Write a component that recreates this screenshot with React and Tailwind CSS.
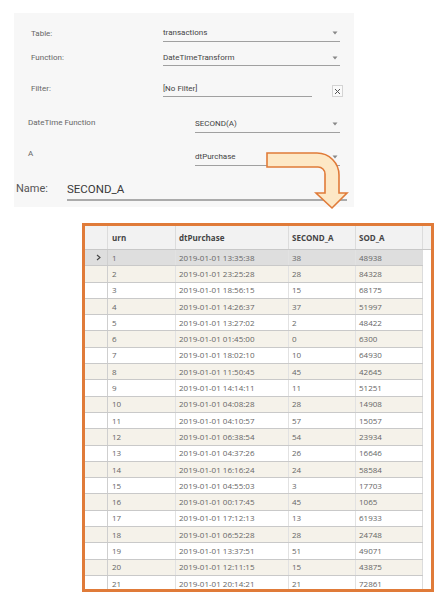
import React from "react";

const rows = [
  ["1", "2019-01-01 13:35:38", "38", "48938"],
  ["2", "2019-01-01 23:25:28", "28", "84328"],
  ["3", "2019-01-01 18:56:15", "15", "68175"],
  ["4", "2019-01-01 14:26:37", "37", "51997"],
  ["5", "2019-01-01 13:27:02", "2", "48422"],
  ["6", "2019-01-01 01:45:00", "0", "6300"],
  ["7", "2019-01-01 18:02:10", "10", "64930"],
  ["8", "2019-01-01 11:50:45", "45", "42645"],
  ["9", "2019-01-01 14:14:11", "11", "51251"],
  ["10", "2019-01-01 04:08:28", "28", "14908"],
  ["11", "2019-01-01 04:10:57", "57", "15057"],
  ["12", "2019-01-01 06:38:54", "54", "23934"],
  ["13", "2019-01-01 04:37:26", "26", "16646"],
  ["14", "2019-01-01 16:16:24", "24", "58584"],
  ["15", "2019-01-01 04:55:03", "3", "17703"],
  ["16", "2019-01-01 00:17:45", "45", "1065"],
  ["17", "2019-01-01 17:12:13", "13", "61933"],
  ["18", "2019-01-01 06:52:28", "28", "24748"],
  ["19", "2019-01-01 13:37:51", "51", "49071"],
  ["20", "2019-01-01 12:11:15", "15", "43875"],
  ["21", "2019-01-01 20:14:21", "21", "72861"],
];

function Caret() {
  return (
    <svg width="6" height="4" viewBox="0 0 6 4" className="shrink-0">
      <path d="M0.5 0.5 L5.5 0.5 L3 3.5 Z" fill="#888" />
    </svg>
  );
}

function Field({ w, h, text, caret = true, big = false }) {
  return (
    <div
      className={`flex items-center justify-between ${w} ${h} ${
        big ? "border-b-2 border-[#ababab]" : "border-b border-[#a0a0a0]"
      } pr-[2px]`}
    >
      <span
        className={
          big
            ? "text-[11.5px] leading-[14px] text-[#3a3a3a]"
            : "text-[8px] leading-[10px] text-[#444]"
        }
      >
        {text}
      </span>
      {caret && <Caret />}
    </div>
  );
}

export default function App() {
  const panelFont = { fontFamily: "Roboto, 'Liberation Sans', sans-serif" };
  return (
    <div className="relative w-[448px] h-[605px] bg-white overflow-hidden">
      {/* Settings panel */}
      <div
        className="ml-[14px] mt-[13px] w-[340px] h-[194px] bg-[#f7f7f7] flex flex-col"
        style={panelFont}
      >
        <div className="mt-[12px] flex items-center pl-[17px]">
          <div className="w-[132px] text-[8px] text-[#666]">Table:</div>
          <Field w="w-[177px]" h="h-[17px]" text="transactions" />
        </div>
        <div className="mt-[8px] flex items-center pl-[17px]">
          <div className="w-[132px] text-[8px] text-[#666]">Function:</div>
          <Field w="w-[177px]" h="h-[16px]" text="DateTimeTransform" />
        </div>
        <div className="mt-[15px] flex items-end pl-[17px]">
          <div className="w-[132px] text-[8px] text-[#666] self-center">Filter:</div>
          <Field w="w-[149px]" h="h-[16px]" text="[No Filter]" caret={false} />
          <div className="ml-[20px] w-[11px] h-[12px] border border-[#d4d4d4] bg-[#fafafa] flex items-center justify-center">
            <svg width="7" height="7" viewBox="0 0 7 7">
              <path d="M1 1 L6 6 M6 1 L1 6" stroke="#555" strokeWidth="1" />
            </svg>
          </div>
        </div>
        <div className="mt-[19px] flex items-center pl-[14px]">
          <div className="w-[167px] text-[8px] text-[#666] pb-[4px]">DateTime Function</div>
          <Field w="w-[145px]" h="h-[17px]" text="SECOND(A)" />
        </div>
        <div className="mt-[15px] flex items-center pl-[14px]">
          <div className="w-[167px] text-[8px] text-[#666] pb-[6px]">A</div>
          <Field w="w-[145px]" h="h-[17px]" text="dtPurchase" />
        </div>
        <div className="mt-[13px] flex items-center pl-[2px]">
          <div className="w-[51px] text-[11px] text-[#555] pb-[2px]">Name:</div>
          <Field w="w-[280px]" h="h-[22px]" text="SECOND_A" caret={false} big />
        </div>
      </div>

      {/* Table */}
      <div
        className="ml-[82px] mt-[16px] w-[352px] h-[369px] border-[3px] border-[#e07b39] bg-white overflow-hidden"
        style={{ fontFamily: "'Open Sans', 'Liberation Sans', sans-serif" }}
      >
        <div className="flex h-[24px] bg-[#f2f2f2] border-b border-[#c8c8c8] text-[8px] font-bold text-[#444]">
          <div className="w-[23px] border-r border-[#dcdcdc]" />
          <div className="w-[68px] border-r border-[#dcdcdc] flex items-center pl-[4px]">urn</div>
          <div className="w-[113px] border-r border-[#dcdcdc] flex items-center pl-[3px]">dtPurchase</div>
          <div className="w-[67px] border-r border-[#dcdcdc] flex items-center pl-[3px]">SECOND_A</div>
          <div className="w-[67px] border-r border-[#dcdcdc] flex items-center pl-[3px]">SOD_A</div>
          <div className="flex-1" />
        </div>
        {rows.map((r, i) => {
          const bg = i === 0 ? "bg-[#dedede]" : i % 2 === 1 ? "bg-[#f5f2ea]" : "bg-white";
          return (
            <div key={r[0]} className="flex h-[16.3px] text-[8px] text-[#666]">
              <div className={`flex ${bg} border-b border-[#c9c9c9]`}>
                <div className="w-[23px] border-r border-[#cfcfcf] flex items-center justify-center pl-[4px]">
                  {i === 0 && (
                    <svg width="5" height="7" viewBox="0 0 5 7">
                      <path d="M1 1 L4 3.5 L1 6" stroke="#444" strokeWidth="1.1" fill="none" />
                    </svg>
                  )}
                </div>
                <div className="w-[68px] border-r border-[#e2e2e2] flex items-center pl-[4px]">{r[0]}</div>
                <div className="w-[113px] border-r border-[#e2e2e2] flex items-center pl-[3px]">{r[1]}</div>
                <div className="w-[67px] border-r border-[#e2e2e2] flex items-center pl-[3px]">{r[2]}</div>
                <div className="w-[67px] border-r border-[#dcdcdc] flex items-center pl-[3px]">{r[3]}</div>
              </div>
              <div className="flex-1" />
            </div>
          );
        })}
      </div>

      {/* Curved arrow overlay */}
      <svg
        className="absolute left-0 top-0 pointer-events-none"
        width="448"
        height="605"
        viewBox="0 0 448 605"
      >
        <path
          d="M267 153 H317 A22 22 0 0 1 339 175 V193 H347 L332 208 L316 193 H325 V174 A7 7 0 0 0 318 167 H267 Z"
          fill="#fde8c6"
          stroke="#e07b39"
          strokeWidth="1.6"
          strokeLinejoin="miter"
        />
      </svg>
    </div>
  );
}
